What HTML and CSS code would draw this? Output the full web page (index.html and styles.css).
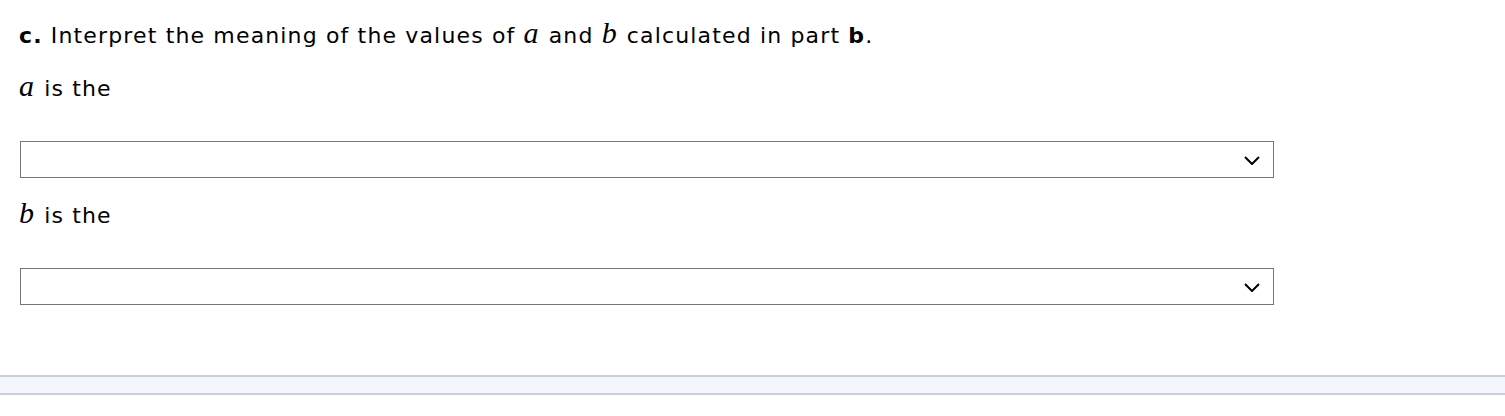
FILE: index.html
```html
<!DOCTYPE html>
<html>
<head>
<meta charset="utf-8">
<link rel="stylesheet" href="styles.css">
</head>
<body>
<div class="question">
  <p class="line title"><b>c.</b> Interpret the meaning of the values of <span class="math">a</span> and <span class="math">b</span> calculated in part <b>b</b>.</p>
  <p class="line prompt"><span class="math">a</span> is the</p>
  <div class="select">
    <svg class="chevron" width="16" height="9" viewBox="0 0 16 9"><polyline points="1,1 8,8 15,1" fill="none" stroke="#000" stroke-width="2"/></svg>
  </div>
  <p class="line prompt"><span class="math">b</span> is the</p>
  <div class="select">
    <svg class="chevron" width="16" height="9" viewBox="0 0 16 9"><polyline points="1,1 8,8 15,1" fill="none" stroke="#000" stroke-width="2"/></svg>
  </div>
</div>
<div class="band"></div>
</body>
</html>
```
FILE: styles.css
```css
html, body {
  margin: 0;
  padding: 0;
  background: #fff;
}
body {
  font-family: "DejaVu Sans", Verdana, sans-serif;
  font-size: 22px;
  letter-spacing: 1.15px;
  color: #000;
}
.question {
  padding: 21px 0 0 20px;
  height: 375px;
  box-sizing: border-box;
}
.line {
  margin: 0;
  height: 30px;
  line-height: 30px;
  white-space: nowrap;
}
.title {
  margin-left: -1px;
}
.prompt {
  margin-top: 22px;
  margin-left: -1px;
}
.title + .prompt {
  margin-top: 23px;
}
.select + .prompt {
  margin-top: 23px;
}
.math {
  font-family: "Liberation Serif", "Times New Roman", serif;
  font-style: italic;
  font-size: 30px;
  letter-spacing: 0;
  line-height: 0;
  padding-right: 2px;
}
.select {
  margin-top: 37px;
  width: 1254px;
  height: 37px;
  box-sizing: border-box;
  border: 1px solid #767676;
  display: flex;
  align-items: center;
  justify-content: flex-end;
  padding-right: 13px;
  background: #fff;
}
.chevron {
  display: block;
  margin-top: 2px;
}
.band {
  height: 20px;
  box-sizing: border-box;
  border-top: 2px solid #c6cfda;
  border-bottom: 2px solid #c6cfda;
  background: #f3f7fb;
}
```
